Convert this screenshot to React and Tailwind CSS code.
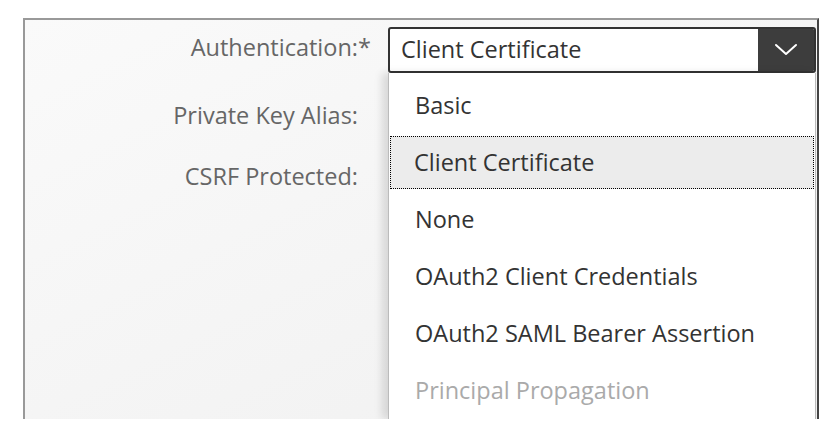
import React from 'react';

const options = [
  { label: 'Basic' },
  { label: 'Client Certificate', focused: true },
  { label: 'None' },
  { label: 'OAuth2 Client Credentials' },
  { label: 'OAuth2 SAML Bearer Assertion' },
  { label: 'Principal Propagation', disabled: true },
];

const Label = ({ text, required, className }) => (
  <div className={`flex justify-end items-center h-[30px] text-[23.5px] text-[#666] ${className}`}>
    <span>{text}</span>
    <span className="w-[14px] text-left">{required ? '*' : ''}</span>
  </div>
);

export default function App() {
  return (
    <div
      className="w-[837px] h-[445px] bg-white pt-[18px] pl-[23px]"
      style={{ fontFamily: '"Open Sans", "Liberation Sans", sans-serif' }}
    >
      <div className="w-[796px] h-[401px] flex border-t-2 border-l-2 border-r-2 border-t-[#999] border-l-[#999] border-r-[#444] bg-gradient-to-br from-[#fafafa] to-[#f0f0f0] overflow-hidden">
        {/* labels */}
        <div className="w-[347px] flex flex-col pt-[13px]">
          <Label text="Authentication:" required />
          <Label text="Private Key Alias:" className="mt-[38px]" />
          <Label text="CSRF Protected:" className="mt-[31px]" />
        </div>

        {/* select + open list */}
        <div className="ml-[16px] w-[428px] flex flex-col pt-[7px]">
          <div className="h-[46px] flex border-2 border-[#333] rounded-[3px] bg-white overflow-hidden">
            <div className="flex-1 flex items-center pl-[11px] text-[23.5px] text-[#333]">Client Certificate</div>
            <div className="w-[56px] bg-[#3d3d3d] flex items-center justify-center">
              <svg width="24" height="14" viewBox="0 0 24 14" fill="none">
                <polyline points="2,2 12,11 22,2" stroke="white" strokeWidth="2" strokeLinecap="round" strokeLinejoin="round" />
              </svg>
            </div>
          </div>
          <div className="flex-1 bg-white border-x border-[#bbb] pt-[4px] shadow-[-6px_0_8px_rgba(0,0,0,0.12)]">
            {options.map((o) => (
              <div key={o.label} className="h-[57px] flex items-stretch">
                <div
                  className={`flex-1 flex items-center pl-[23px] text-[23.5px] ${
                    o.focused ? 'my-[2px] mx-[1px] border border-dotted border-black bg-[#ececec]' : 'm-[3px]'
                  } ${o.disabled ? 'text-[#aaa]' : 'text-[#333]'}`}
                >
                  {o.label}
                </div>
              </div>
            ))}
          </div>
        </div>
      </div>
    </div>
  );
}
